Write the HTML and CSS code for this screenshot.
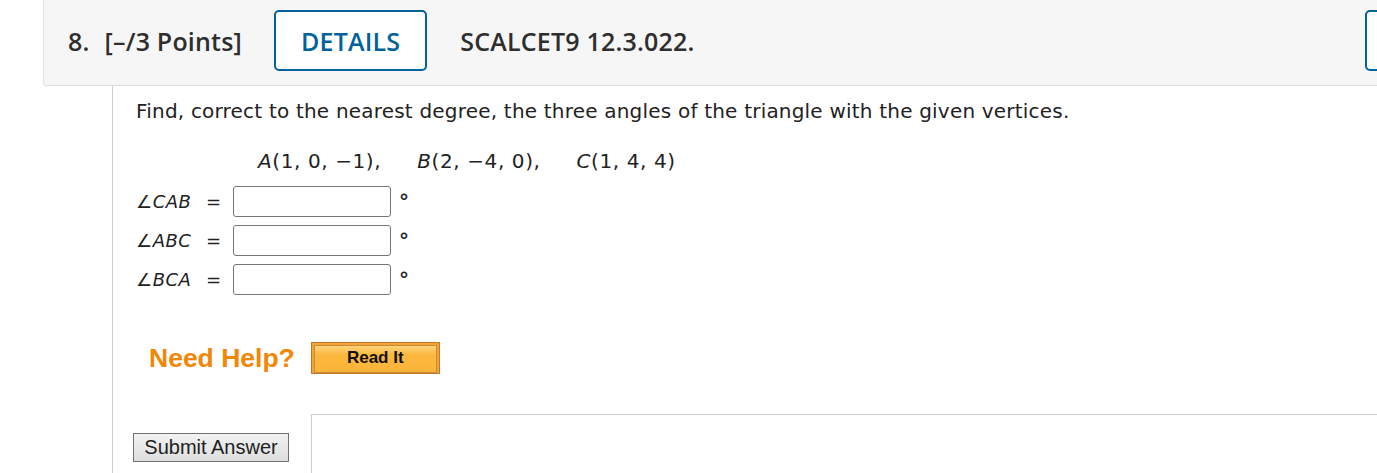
FILE: index.html
```html
<!DOCTYPE html>
<html lang="en">
<head>
  <meta charset="UTF-8" />
  <title>Question 8</title>
  <meta name="viewport" content="width=device-width, initial-scale=1.0" />
  <link rel="stylesheet" href="styles.css">
</head>
<body>
  <div class="page">
    <div class="q-header">
      <span class="q-number">8.</span>
      <span class="q-points">[&ndash;/3 Points]</span>
      <button class="details-btn">DETAILS</button>
      <span class="q-ref">SCALCET9 12.3.022.</span>
      <button class="notes-btn"></button>
    </div>

    <div class="q-body">
      <p class="prompt">Find, correct to the nearest degree, the three angles of the triangle with the given vertices.</p>
      <p class="vertices">
        <span><i>A</i>(1, 0, &minus;1),</span>
        <span><i>B</i>(2, &minus;4, 0),</span>
        <span><i>C</i>(1, 4, 4)</span>
      </p>

      <div class="angles">
        <div class="angle-row">
          <span class="angle-label">&ang;<i>CAB</i></span>
          <span class="eq">=</span>
          <input type="text" class="answer" />
          <span class="deg">&deg;</span>
        </div>
        <div class="angle-row">
          <span class="angle-label">&ang;<i>ABC</i></span>
          <span class="eq">=</span>
          <input type="text" class="answer" />
          <span class="deg">&deg;</span>
        </div>
        <div class="angle-row">
          <span class="angle-label">&ang;<i>BCA</i></span>
          <span class="eq">=</span>
          <input type="text" class="answer" />
          <span class="deg">&deg;</span>
        </div>
      </div>

      <div class="help">
        <span class="need-help">Need Help?</span>
        <button class="read-it"><span>Read It</span></button>
      </div>

      <div class="submit-row">
        <button class="submit-btn">Submit Answer</button>
        <div class="practice-box"></div>
      </div>
    </div>
  </div>
</body>
</html>
```

FILE: styles.css
```css
body {
  margin: 0;
  background: #fff;
  overflow: hidden;
  font-family: "DejaVu Sans", Verdana, sans-serif;
  color: #222;
}
.page {
  padding-left: 43px;
}
.q-header {
  display: flex;
  align-items: center;
  height: 86px;
  margin-right: -140px;
  padding: 0 0 4px 24px;
  box-sizing: border-box;
  background: #f6f6f6;
  border-left: 1px solid #e2e2e2;
  border-bottom: 1px solid #dcdcdc;
  border-bottom-left-radius: 3px;
  font-family: "Open Sans", sans-serif;
  font-weight: 600;
  font-size: 25px;
  color: #2e2e2e;
  letter-spacing: 0.2px;
}
.q-number {
  margin-right: 15px;
}
.details-btn,
.notes-btn {
  height: 61px;
  padding: 0 25px;
  margin-left: 32px;
  background: #fff;
  border: 2px solid #00629b;
  border-radius: 5px;
  font-family: "Open Sans", sans-serif;
  font-weight: 600;
  font-size: 25px;
  color: #00629b;
  letter-spacing: 0.2px;
}
.q-ref {
  margin-left: 33px;
}
.notes-btn {
  width: 152px;
  margin-left: auto;
}
.q-body {
  margin-left: 69px;
  border-left: 1px solid #cfcfcf;
  padding: 13px 0 0 23px;
  height: 400px;
}
.prompt {
  margin: 0;
  font-size: 20px;
  line-height: 24px;
  letter-spacing: 0.2px;
}
.vertices {
  margin: 26px 0 0;
  padding-left: 122px;
  font-size: 20px;
  line-height: 24px;
  letter-spacing: 0.6px;
  display: flex;
  gap: 36px;
}
.angles {
  margin-top: 13px;
  display: flex;
  flex-direction: column;
  gap: 8px;
}
.angle-row {
  display: flex;
  align-items: center;
  height: 31px;
  font-size: 18px;
}
.angle-label {
  width: 70px;
  letter-spacing: 0.5px;
}
.eq {
  width: 27px;
}
.answer {
  width: 158px;
  height: 31px;
  box-sizing: border-box;
  border: 1px solid #767676;
  border-radius: 3px;
  margin: 0;
}
.deg {
  align-self: flex-start;
  margin-left: 8px;
  margin-top: 5px;
  font-weight: bold;
  font-size: 20px;
  line-height: 20px;
}
.help {
  display: flex;
  align-items: center;
  margin-top: 47px;
  padding-left: 13px;
  gap: 16px;
}
.need-help {
  font-family: "Liberation Sans", Arial, sans-serif;
  font-weight: bold;
  font-size: 26.5px;
  color: #f28705;
}
.read-it {
  width: 129px;
  height: 32px;
  padding: 2px;
  background: #f3a332;
  border: 1px solid #c2782a;
  box-sizing: border-box;
}
.read-it span {
  display: block;
  height: 100%;
  line-height: 24px;
  background: linear-gradient(#ffd278, #fcb83e 35%, #fbb43a);
  border: 1px solid #c98a3c;
  font-family: "Liberation Sans", Arial, sans-serif;
  font-weight: bold;
  font-size: 17px;
  color: #111;
}
.submit-row {
  display: flex;
  align-items: flex-start;
  margin-top: 40px;
  margin-left: -3px;
}
.submit-btn {
  margin-top: 19px;
  width: 156px;
  height: 29px;
  padding: 0;
  background: linear-gradient(#f2f2f2, #dedede);
  border: 1px solid #717171;
  font-family: "Liberation Sans", Arial, sans-serif;
  font-size: 20px;
  color: #222;
}
.practice-box {
  margin-left: 22px;
  flex: 1;
  height: 80px;
  border-top: 1px solid #cccccc;
  border-left: 1px solid #cccccc;
}
```
